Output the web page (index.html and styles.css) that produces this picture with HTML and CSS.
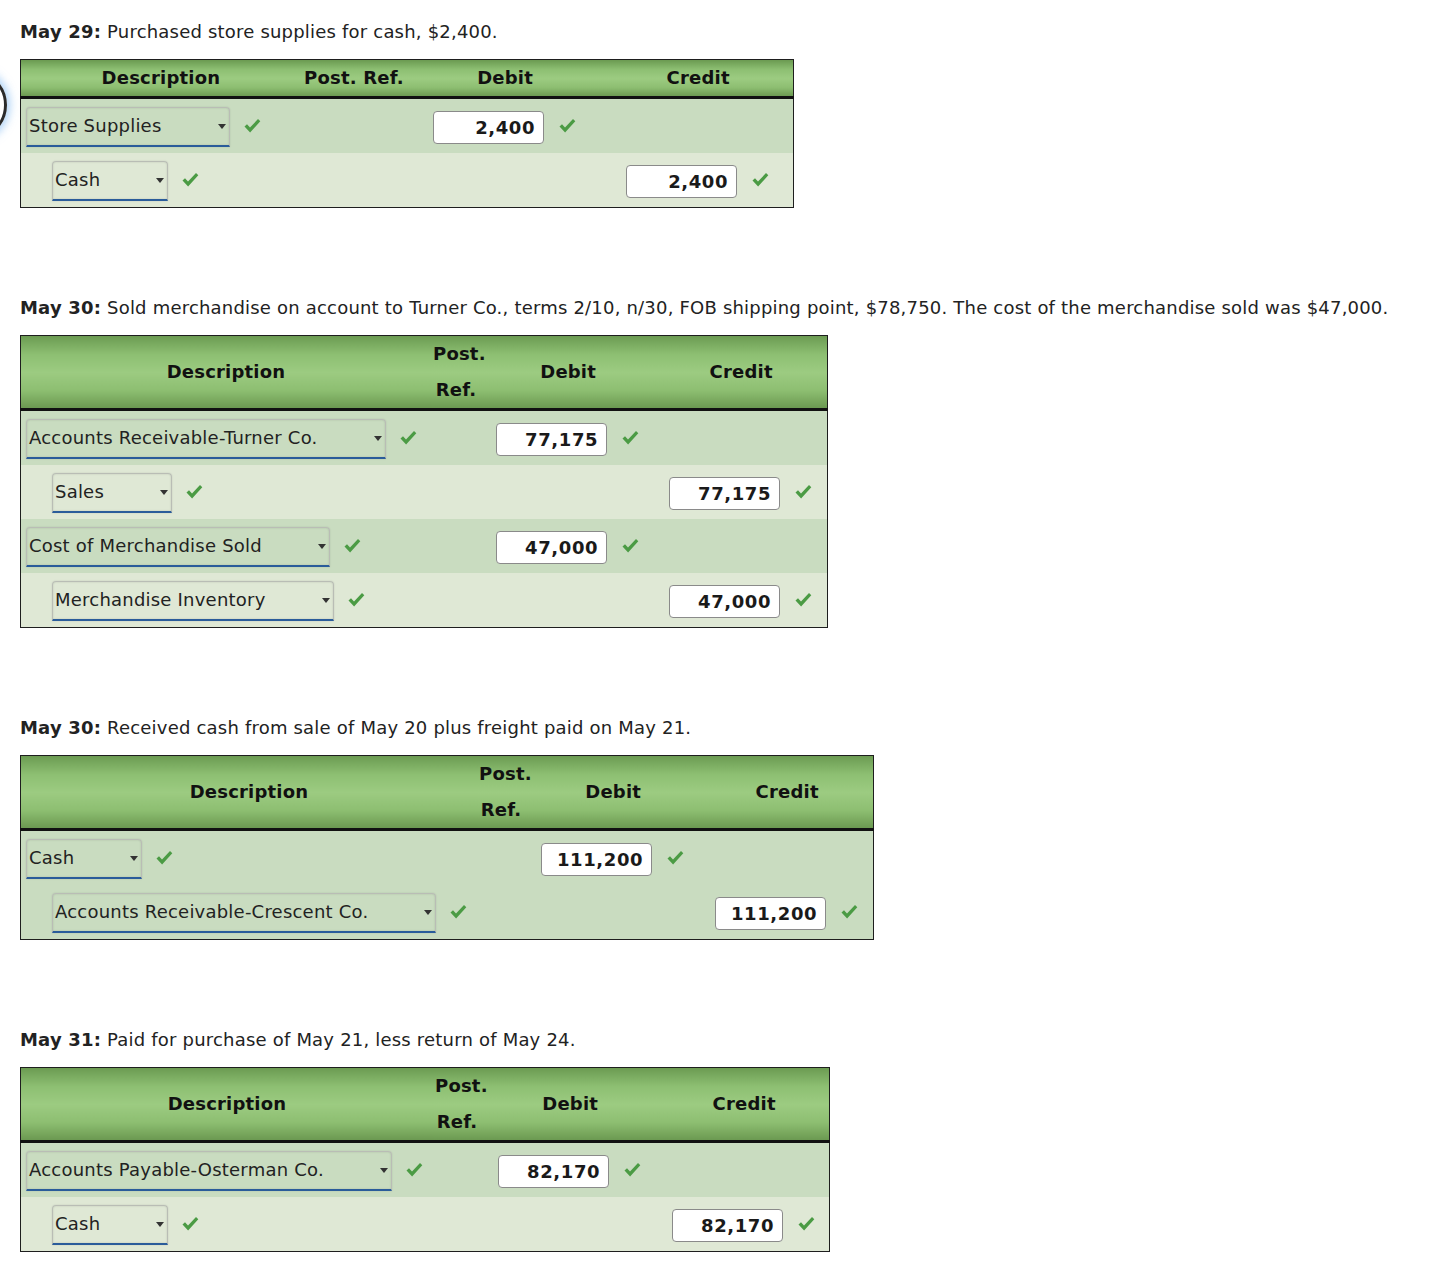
FILE: index.html
```html
<!DOCTYPE html>
<html lang="en">
<head>
<meta charset="utf-8">
<title>Journal entries</title>
<link rel="stylesheet" href="styles.css">
</head>
<body>
<div class="side-button" aria-hidden="true"></div>

<section class="entry">
  <p class="prompt"><b>May 29:</b> Purchased store supplies for cash, $2,400.</p>
  <table class="journal t1">
    <colgroup><col class="c-desc"><col class="c-ref"><col class="c-debit"><col class="c-credit"></colgroup>
    <thead><tr><th>Description</th><th>Post. Ref.</th><th>Debit</th><th>Credit</th></tr></thead>
    <tbody>
      <tr class="dark">
        <td class="desc"><span class="field"><span class="select"><span>Store Supplies</span><i class="arrow"></i></span><svg class="check" viewBox="0 0 20 20"><path d="M2.5 10.5 L5 8.2 L8 11.6 L16 3 L18.3 5.2 L8.1 16.5 Z"/></svg></span></td>
        <td></td>
        <td class="amt"><span class="field"><span class="num">2,400</span><svg class="check" viewBox="0 0 20 20"><path d="M2.5 10.5 L5 8.2 L8 11.6 L16 3 L18.3 5.2 L8.1 16.5 Z"/></svg></span></td>
        <td></td>
      </tr>
      <tr class="light">
        <td class="desc cr"><span class="field"><span class="select"><span>Cash</span><i class="arrow"></i></span><svg class="check" viewBox="0 0 20 20"><path d="M2.5 10.5 L5 8.2 L8 11.6 L16 3 L18.3 5.2 L8.1 16.5 Z"/></svg></span></td>
        <td></td>
        <td></td>
        <td class="amt"><span class="field"><span class="num">2,400</span><svg class="check" viewBox="0 0 20 20"><path d="M2.5 10.5 L5 8.2 L8 11.6 L16 3 L18.3 5.2 L8.1 16.5 Z"/></svg></span></td>
      </tr>
    </tbody>
  </table>
</section>

<section class="entry">
  <p class="prompt"><b>May 30:</b> Sold merchandise on account to Turner Co., terms 2/10, n/30, FOB shipping point, $78,750. The cost of the merchandise sold was $47,000.</p>
  <table class="journal t2">
    <colgroup><col class="c-desc"><col class="c-ref"><col class="c-debit"><col class="c-credit"></colgroup>
    <thead><tr><th>Description</th><th>Post. Ref.</th><th>Debit</th><th>Credit</th></tr></thead>
    <tbody>
      <tr class="dark">
        <td class="desc"><span class="field"><span class="select"><span>Accounts Receivable-Turner Co.</span><i class="arrow"></i></span><svg class="check" viewBox="0 0 20 20"><path d="M2.5 10.5 L5 8.2 L8 11.6 L16 3 L18.3 5.2 L8.1 16.5 Z"/></svg></span></td>
        <td></td>
        <td class="amt"><span class="field"><span class="num">77,175</span><svg class="check" viewBox="0 0 20 20"><path d="M2.5 10.5 L5 8.2 L8 11.6 L16 3 L18.3 5.2 L8.1 16.5 Z"/></svg></span></td>
        <td></td>
      </tr>
      <tr class="light">
        <td class="desc cr"><span class="field"><span class="select"><span>Sales</span><i class="arrow"></i></span><svg class="check" viewBox="0 0 20 20"><path d="M2.5 10.5 L5 8.2 L8 11.6 L16 3 L18.3 5.2 L8.1 16.5 Z"/></svg></span></td>
        <td></td>
        <td></td>
        <td class="amt"><span class="field"><span class="num">77,175</span><svg class="check" viewBox="0 0 20 20"><path d="M2.5 10.5 L5 8.2 L8 11.6 L16 3 L18.3 5.2 L8.1 16.5 Z"/></svg></span></td>
      </tr>
      <tr class="dark">
        <td class="desc"><span class="field"><span class="select"><span>Cost of Merchandise Sold</span><i class="arrow"></i></span><svg class="check" viewBox="0 0 20 20"><path d="M2.5 10.5 L5 8.2 L8 11.6 L16 3 L18.3 5.2 L8.1 16.5 Z"/></svg></span></td>
        <td></td>
        <td class="amt"><span class="field"><span class="num">47,000</span><svg class="check" viewBox="0 0 20 20"><path d="M2.5 10.5 L5 8.2 L8 11.6 L16 3 L18.3 5.2 L8.1 16.5 Z"/></svg></span></td>
        <td></td>
      </tr>
      <tr class="light">
        <td class="desc cr"><span class="field"><span class="select"><span>Merchandise Inventory</span><i class="arrow"></i></span><svg class="check" viewBox="0 0 20 20"><path d="M2.5 10.5 L5 8.2 L8 11.6 L16 3 L18.3 5.2 L8.1 16.5 Z"/></svg></span></td>
        <td></td>
        <td></td>
        <td class="amt"><span class="field"><span class="num">47,000</span><svg class="check" viewBox="0 0 20 20"><path d="M2.5 10.5 L5 8.2 L8 11.6 L16 3 L18.3 5.2 L8.1 16.5 Z"/></svg></span></td>
      </tr>
    </tbody>
  </table>
</section>

<section class="entry">
  <p class="prompt"><b>May 30:</b> Received cash from sale of May 20 plus freight paid on May 21.</p>
  <table class="journal t3">
    <colgroup><col class="c-desc"><col class="c-ref"><col class="c-debit"><col class="c-credit"></colgroup>
    <thead><tr><th>Description</th><th>Post. Ref.</th><th>Debit</th><th>Credit</th></tr></thead>
    <tbody>
      <tr class="dark">
        <td class="desc"><span class="field"><span class="select"><span>Cash</span><i class="arrow"></i></span><svg class="check" viewBox="0 0 20 20"><path d="M2.5 10.5 L5 8.2 L8 11.6 L16 3 L18.3 5.2 L8.1 16.5 Z"/></svg></span></td>
        <td></td>
        <td class="amt"><span class="field"><span class="num">111,200</span><svg class="check" viewBox="0 0 20 20"><path d="M2.5 10.5 L5 8.2 L8 11.6 L16 3 L18.3 5.2 L8.1 16.5 Z"/></svg></span></td>
        <td></td>
      </tr>
      <tr class="dark">
        <td class="desc cr"><span class="field"><span class="select"><span>Accounts Receivable-Crescent Co.</span><i class="arrow"></i></span><svg class="check" viewBox="0 0 20 20"><path d="M2.5 10.5 L5 8.2 L8 11.6 L16 3 L18.3 5.2 L8.1 16.5 Z"/></svg></span></td>
        <td></td>
        <td></td>
        <td class="amt"><span class="field"><span class="num">111,200</span><svg class="check" viewBox="0 0 20 20"><path d="M2.5 10.5 L5 8.2 L8 11.6 L16 3 L18.3 5.2 L8.1 16.5 Z"/></svg></span></td>
      </tr>
    </tbody>
  </table>
</section>

<section class="entry">
  <p class="prompt"><b>May 31:</b> Paid for purchase of May 21, less return of May 24.</p>
  <table class="journal t4">
    <colgroup><col class="c-desc"><col class="c-ref"><col class="c-debit"><col class="c-credit"></colgroup>
    <thead><tr><th>Description</th><th>Post. Ref.</th><th>Debit</th><th>Credit</th></tr></thead>
    <tbody>
      <tr class="dark">
        <td class="desc"><span class="field"><span class="select"><span>Accounts Payable-Osterman Co.</span><i class="arrow"></i></span><svg class="check" viewBox="0 0 20 20"><path d="M2.5 10.5 L5 8.2 L8 11.6 L16 3 L18.3 5.2 L8.1 16.5 Z"/></svg></span></td>
        <td></td>
        <td class="amt"><span class="field"><span class="num">82,170</span><svg class="check" viewBox="0 0 20 20"><path d="M2.5 10.5 L5 8.2 L8 11.6 L16 3 L18.3 5.2 L8.1 16.5 Z"/></svg></span></td>
        <td></td>
      </tr>
      <tr class="light">
        <td class="desc cr"><span class="field"><span class="select"><span>Cash</span><i class="arrow"></i></span><svg class="check" viewBox="0 0 20 20"><path d="M2.5 10.5 L5 8.2 L8 11.6 L16 3 L18.3 5.2 L8.1 16.5 Z"/></svg></span></td>
        <td></td>
        <td></td>
        <td class="amt"><span class="field"><span class="num">82,170</span><svg class="check" viewBox="0 0 20 20"><path d="M2.5 10.5 L5 8.2 L8 11.6 L16 3 L18.3 5.2 L8.1 16.5 Z"/></svg></span></td>
      </tr>
    </tbody>
  </table>
</section>
</body>
</html>
```

FILE: styles.css
```css
html, body {
  margin: 0;
  padding: 0;
  background: #ffffff;
}

body {
  position: relative;
  font-family: "DejaVu Sans", Verdana, sans-serif;
  font-size: 18px;
  color: #222;
  padding: 21px 0 0 20px;
  overflow: hidden;
}

.side-button {
  position: absolute;
  left: -63px;
  top: 70px;
  width: 64px;
  height: 64px;
  border: 3px solid #2a2a2a;
  border-radius: 50%;
  box-shadow: 0 0 8px 3px rgba(120, 180, 240, 0.6);
}

.entry {
  margin-bottom: 89px;
}

.entry:last-child {
  margin-bottom: 0;
}

.prompt {
  margin: 0 0 16px;
  line-height: 22px;
  letter-spacing: 0.2px;
}

.prompt b {
  font-weight: bold;
}

.journal {
  border-collapse: collapse;
  table-layout: fixed;
  border: 1px solid #1e1e1e;
}

.journal th {
  background: linear-gradient(to bottom, #6c9c53 0%, #8dbf72 25%, #9ccb81 50%, #8dbe71 75%, #6a9850 100%);
  font-weight: bold;
  line-height: 36px;
  padding: 0 2px;
  text-align: center;
  color: #111;
  border-bottom: 3px solid #111;
  letter-spacing: 0.2px;
}

.t1 { width: 774px; }
.t1 .c-desc { width: 280px; }
.t1 .c-ref { width: 106px; }
.t1 .c-debit { width: 196px; }
.t1 .c-credit { width: 190px; }

.t2 { width: 808px; }
.t2 .c-desc { width: 410px; }
.t2 .c-ref { width: 50px; }
.t2 .c-debit { width: 174px; }
.t2 .c-credit { width: 172px; }

.t3 { width: 854px; }
.t3 .c-desc { width: 456px; }
.t3 .c-ref { width: 48px; }
.t3 .c-debit { width: 176px; }
.t3 .c-credit { width: 172px; }

.t4 { width: 810px; }
.t4 .c-desc { width: 412px; }
.t4 .c-ref { width: 48px; }
.t4 .c-debit { width: 178px; }
.t4 .c-credit { width: 170px; }

.journal td {
  height: 54px;
  padding: 0;
  vertical-align: middle;
}

.journal tr.dark td { background: #c9dcc0; }
.journal tr.light td { background: #dfe8d5; }

.desc {
  padding-left: 5px !important;
  text-align: left;
}

.desc.cr {
  padding-left: 31px !important;
}

.amt {
  text-align: center;
}

.field {
  display: inline-flex;
  align-items: center;
  vertical-align: middle;
}

.select {
  display: inline-flex;
  align-items: center;
  justify-content: space-between;
  gap: 56px;
  height: 40px;
  box-sizing: border-box;
  padding: 0 3px 0 2px;
  border: 1px solid #b9bdb5;
  border-bottom: 2px solid #2a5c9a;
  border-radius: 4px 4px 0 0;
  box-shadow: inset 0 0 2px rgba(0,0,0,0.15), 0 0 2px rgba(0,0,0,0.12);
  color: #222;
  line-height: 22px;
  white-space: nowrap;
  letter-spacing: 0.22px;
  margin-top: 1px;
}

.arrow {
  display: block;
  width: 0;
  height: 0;
  border-left: 4px solid transparent;
  border-right: 4px solid transparent;
  border-top: 5px solid #333;
}

.desc .check {
  margin-left: 12px;
}

.num {
  display: inline-block;
  box-sizing: border-box;
  min-width: 111px;
  height: 33px;
  line-height: 31px;
  padding: 0 8px 0 10px;
  background: #fff;
  border: 1px solid #8a8a8a;
  border-radius: 4px;
  font-weight: bold;
  text-align: right;
  color: #1a1a1a;
  letter-spacing: 0.6px;
  margin-top: 2px;
}

.amt .check {
  margin-left: 13px;
}

.check {
  width: 20px;
  height: 20px;
  fill: #4b9b44;
  flex: none;
}
```
